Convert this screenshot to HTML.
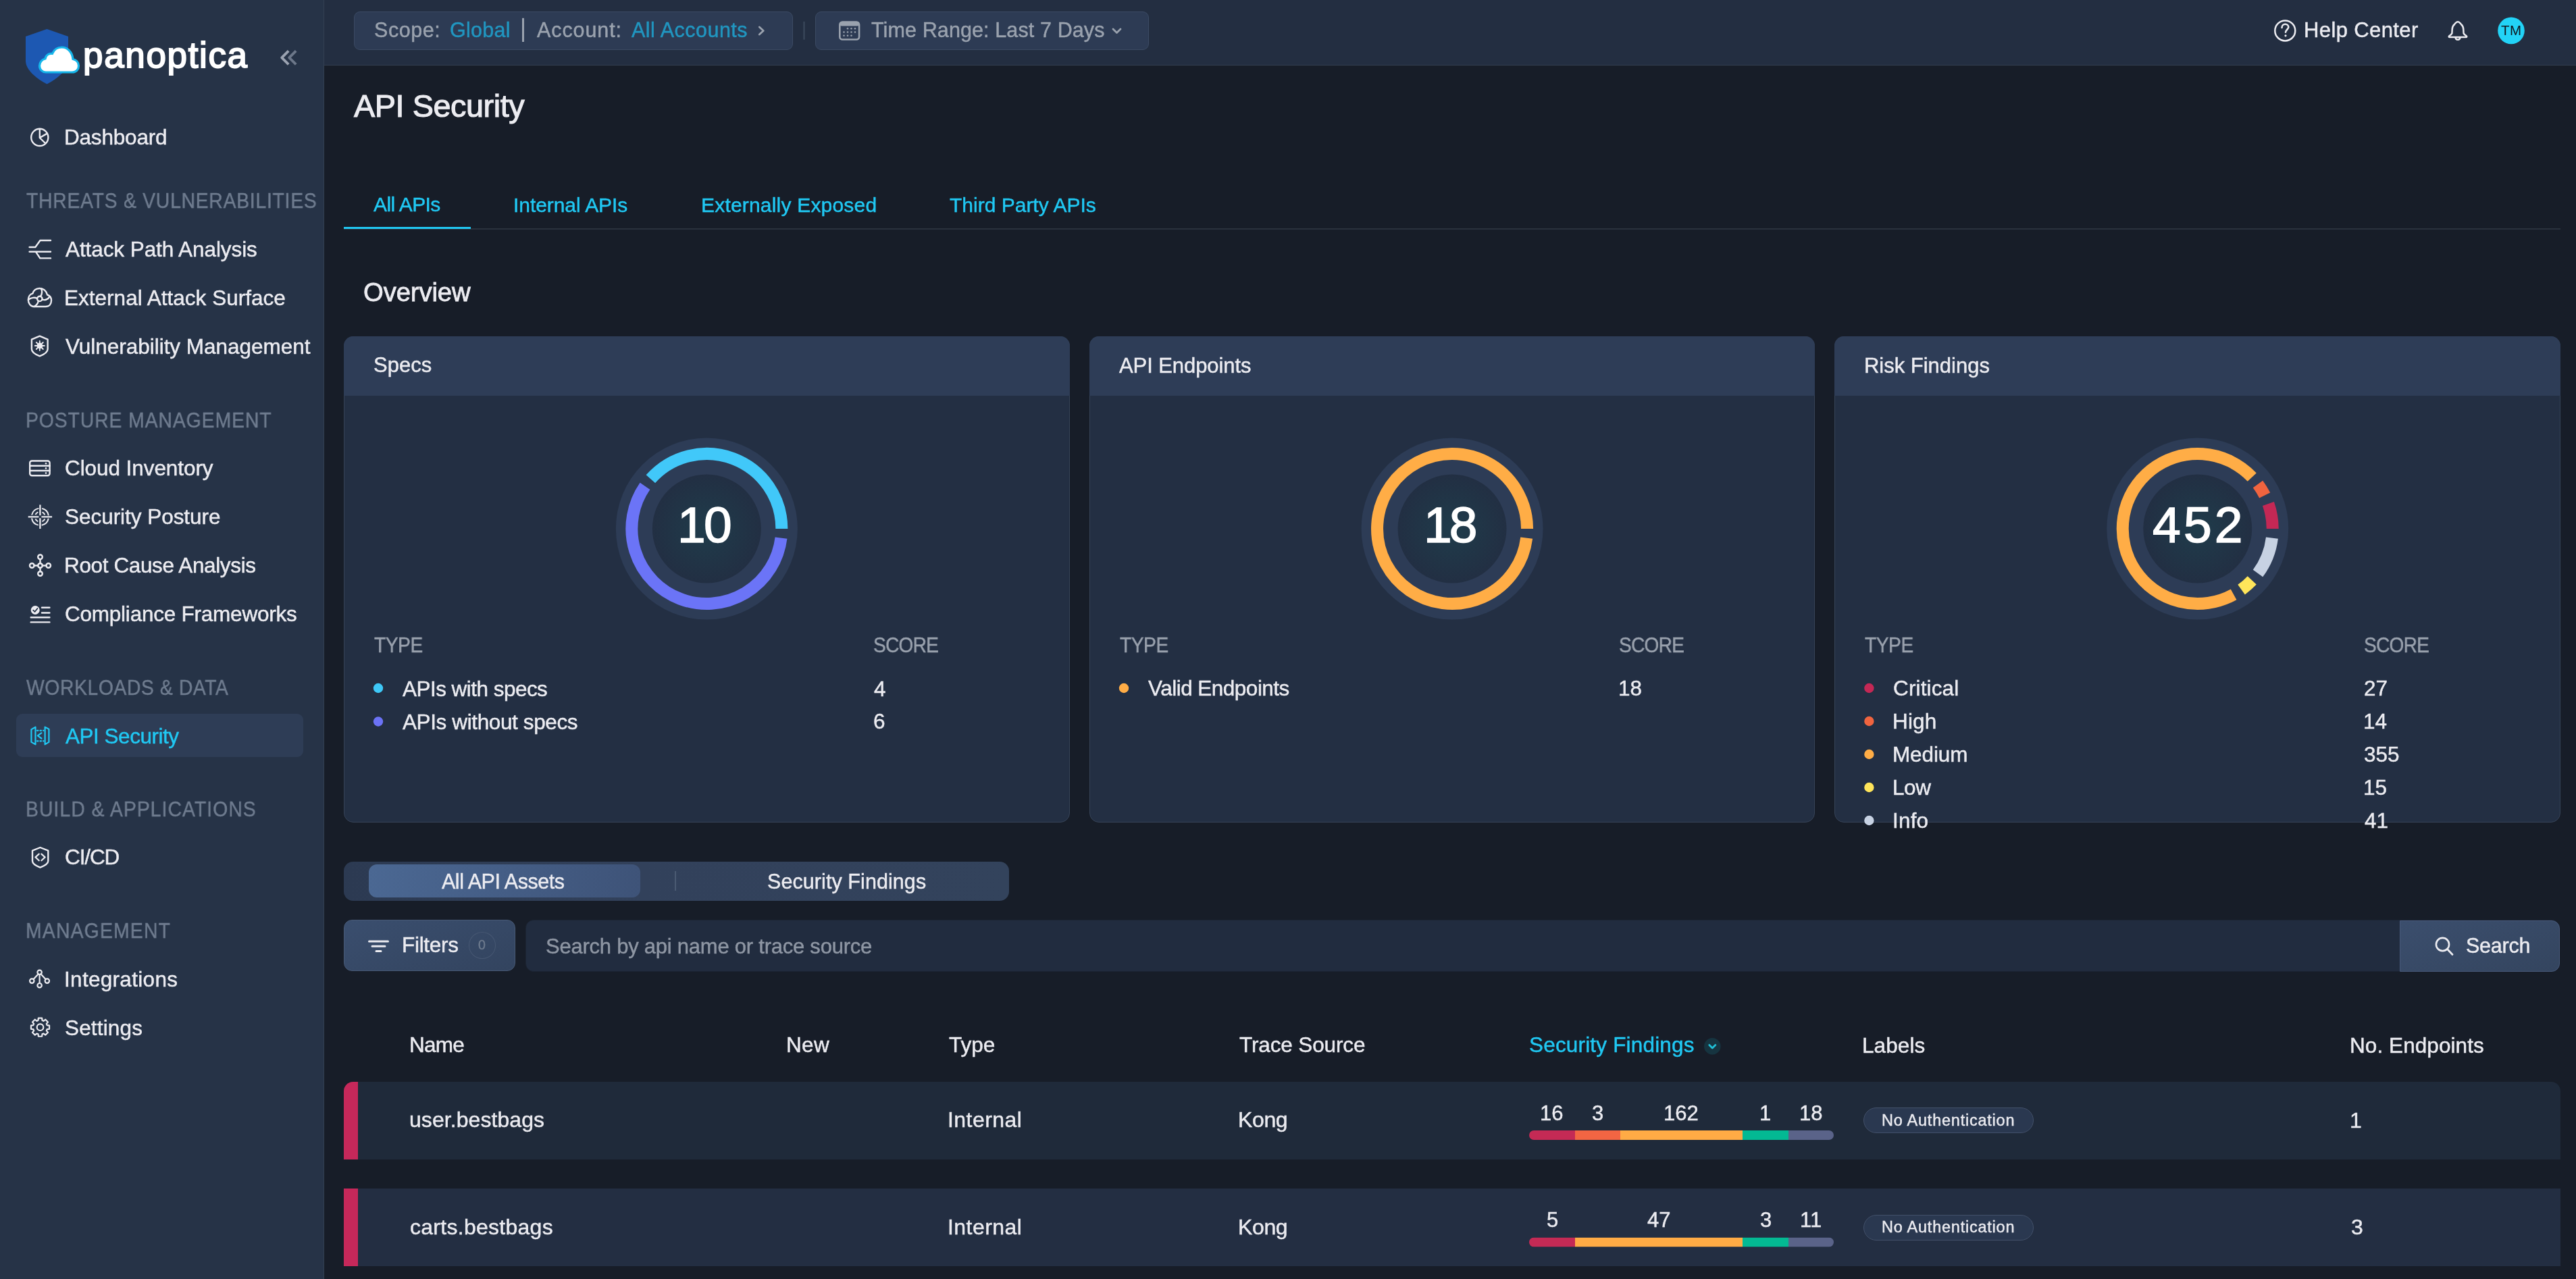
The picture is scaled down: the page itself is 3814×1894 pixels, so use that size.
<!DOCTYPE html>
<html><head><meta charset="utf-8"><title>API Security</title>
<style>
html,body{margin:0;padding:0;}
body{width:3814px;height:1894px;overflow:hidden;position:relative;background:#171d28;font-family:"Liberation Sans", sans-serif;}
.t{position:absolute;white-space:nowrap;line-height:normal;-webkit-text-stroke:0.45px currentColor;will-change:transform;}
</style></head><body>
<div style="position:absolute;left:0px;top:0px;width:480px;height:1894px;background:#263347"></div><div style="position:absolute;left:478.5px;top:0px;width:1.5px;height:1894px;background:#333f51"></div><div style="position:absolute;left:480px;top:0px;width:3334px;height:96px;background:#232e41"></div><div style="position:absolute;left:480px;top:96px;width:3334px;height:1px;background:#323e50"></div><div style="position:absolute;left:524.2px;top:17.3px;width:649.5px;height:56.3px;background:#2d3b54;border:1px solid #3b4a63;box-sizing:border-box;border-radius:9px"></div><div style="position:absolute;left:1206.5px;top:17.3px;width:494.0999999999999px;height:56.3px;background:#2d3b54;border:1px solid #3b4a63;box-sizing:border-box;border-radius:9px"></div><div style="position:absolute;left:24.4px;top:1056.8px;width:425.1px;height:64.60000000000014px;background:#2e3d56;border-radius:9px"></div><div style="position:absolute;left:509px;top:338px;width:3282px;height:2px;background:#2a313d"></div><div style="position:absolute;left:509px;top:335.5px;width:188px;height:3.0px;background:#20c8f3"></div><div style="position:absolute;left:509px;top:498.2px;width:1074.7px;height:719.8px;background:#232f43;border:1.5px solid #364357;box-sizing:border-box;border-radius:14px;overflow:hidden"></div><div style="position:absolute;left:509px;top:498.2px;width:1074.7px;height:87.59999999999997px;background:#2e3d57;border-radius:14px 14px 0 0"></div><div style="position:absolute;left:1612.7px;top:498.2px;width:1074.7px;height:719.8px;background:#232f43;border:1.5px solid #364357;box-sizing:border-box;border-radius:14px;overflow:hidden"></div><div style="position:absolute;left:1612.7px;top:498.2px;width:1074.7px;height:87.59999999999997px;background:#2e3d57;border-radius:14px 14px 0 0"></div><div style="position:absolute;left:2716.4px;top:498.2px;width:1074.7000000000003px;height:719.8px;background:#232f43;border:1.5px solid #364357;box-sizing:border-box;border-radius:14px;overflow:hidden"></div><div style="position:absolute;left:2716.4px;top:498.2px;width:1074.7000000000003px;height:87.59999999999997px;background:#2e3d57;border-radius:14px 14px 0 0"></div><div style="position:absolute;left:509.1px;top:1276.1px;width:984.8000000000001px;height:57.700000000000045px;background:linear-gradient(90deg,#2c3a52,#32415b 45%,#33435c);border-radius:14px"></div><div style="position:absolute;left:546px;top:1280px;width:402px;height:48.90000000000009px;background:linear-gradient(100deg,#4b6893,#3e5378);border-radius:12px"></div><div style="position:absolute;left:998.6px;top:1290px;width:2.0px;height:29px;background:#4a5a72"></div><div style="position:absolute;left:509px;top:1362.3px;width:254px;height:75.29999999999995px;background:linear-gradient(160deg,#3a4e6e,#33445f);border:1px solid #485a76;box-sizing:border-box;border-radius:12px"></div><div style="position:absolute;left:694px;top:1380px;width:39.89999999999998px;height:39.59999999999991px;border:1.5px solid #475873;box-sizing:border-box;border-radius:50%"></div><div style="position:absolute;left:778px;top:1362.3px;width:3012.2px;height:77.20000000000005px;background:#212c3f;border:1px solid #1c2433;box-sizing:border-box;border-radius:12px"></div><div style="position:absolute;left:3553px;top:1363px;width:237.19999999999982px;height:75.79999999999995px;background:linear-gradient(160deg,#3b4e6d,#34455f);border:1px solid #48597a;box-sizing:border-box;border-radius:0 12px 12px 0"></div><div style="position:absolute;left:509px;top:1601.7px;width:3282px;height:115.09999999999991px;background:#1f2a3a;border-radius:14px 14px 0 0"></div><div style="position:absolute;left:509px;top:1601.7px;width:21px;height:115.09999999999991px;background:#c6285a;border-radius:14px 0 0 0"></div><div style="position:absolute;left:509px;top:1759.8px;width:3282px;height:115.20000000000005px;background:#232e42"></div><div style="position:absolute;left:509px;top:1759.8px;width:21px;height:115.20000000000005px;background:#c6285a"></div><div style="position:absolute;left:2758.6px;top:1640.3px;width:252.0px;height:38.100000000000136px;background:#2a3850;border:1.5px solid #425069;box-sizing:border-box;border-radius:20px"></div><div style="position:absolute;left:2758.6px;top:1798.8px;width:252.0px;height:38.100000000000136px;background:#2a3850;border:1.5px solid #425069;box-sizing:border-box;border-radius:20px"></div>
<svg width="3814" height="1894" style="position:absolute;left:0;top:0"><defs><radialGradient id="glow"><stop offset="0" stop-color="#1f3c4b"/><stop offset="1" stop-color="#222f43"/></radialGradient></defs><circle cx="1046.35" cy="783" r="134.5" fill="#2d3c56"/><circle cx="1046.35" cy="783" r="80.5" fill="url(#glow)"/><circle cx="2150.05" cy="783" r="134.5" fill="#2d3c56"/><circle cx="2150.05" cy="783" r="80.5" fill="url(#glow)"/><circle cx="3253.75" cy="783" r="134.5" fill="#2d3c56"/><circle cx="3253.75" cy="783" r="80.5" fill="url(#glow)"/><path d="M1156.52 796.53 A111 111 0 1 1 954.98 719.97" stroke="#6b74f7" stroke-width="18" fill="none"/><path d="M963.34 709.30 A111 111 0 0 1 1157.35 783.00" stroke="#41c8f9" stroke-width="18" fill="none"/><path d="M2260.22 796.53 A111 111 0 1 1 2261.05 783.00" stroke="#ffad46" stroke-width="18" fill="none"/><path d="M3363.92 796.53 A111 111 0 0 1 3343.00 848.99" stroke="#c7d2e3" stroke-width="18" fill="none"/><path d="M3334.29 859.38 A111 111 0 0 1 3318.58 873.10" stroke="#ffe55a" stroke-width="18" fill="none"/><path d="M3307.11 880.33 A111 111 0 1 1 3334.29 706.62" stroke="#ffad46" stroke-width="18" fill="none"/><path d="M3343.00 717.01 A111 111 0 0 1 3353.16 733.62" stroke="#f0643f" stroke-width="18" fill="none"/><path d="M3358.44 746.11 A111 111 0 0 1 3364.75 783.00" stroke="#c42855" stroke-width="18" fill="none"/><circle cx="560" cy="1019" r="7.2" fill="#3ec8f7"/><circle cx="560" cy="1068.5" r="7.2" fill="#6b72f5"/><circle cx="1664" cy="1019" r="7.2" fill="#ffad46"/><circle cx="2767.4" cy="1019" r="7.2" fill="#c42855"/><circle cx="2767.4" cy="1068" r="7.2" fill="#f0643f"/><circle cx="2767.4" cy="1117" r="7.2" fill="#ffad46"/><circle cx="2767.4" cy="1166" r="7.2" fill="#ffe55a"/><circle cx="2767.4" cy="1215" r="7.2" fill="#c7d2e3"/><clipPath id="bc1674"><rect x="2264" y="1674" width="451" height="14" rx="7"/></clipPath><g clip-path="url(#bc1674)"><rect x="2264" y="1674" width="68" height="14" fill="#c42a55"/><rect x="2332" y="1674" width="67" height="14" fill="#f26543"/><rect x="2399" y="1674" width="181" height="14" fill="#ffab45"/><rect x="2580" y="1674" width="68" height="14" fill="#03b993"/><rect x="2648" y="1674" width="67" height="14" fill="#5a6389"/></g><clipPath id="bc1832"><rect x="2264" y="1832.5" width="451" height="14" rx="7"/></clipPath><g clip-path="url(#bc1832)"><rect x="2264" y="1832.5" width="68" height="14" fill="#c42a55"/><rect x="2332" y="1832.5" width="248" height="14" fill="#ffab45"/><rect x="2580" y="1832.5" width="68" height="14" fill="#03b993"/><rect x="2648" y="1832.5" width="67" height="14" fill="#5a6389"/></g><circle cx="58.8" cy="203.4" r="12.6" stroke="#ececf1" stroke-width="2.4" fill="none"/><path d="M58.8 191 V204 L69.8 197.6 M58.8 204 L67 212" stroke="#ececf1" stroke-width="2.4" fill="none" stroke-linecap="round" stroke-linejoin="round" /><path d="M43.6 366 H52.3 L59.5 356 H75 M43.6 372.8 H75 M53 372.8 L59.3 382.4 H75" stroke="#ececf1" stroke-width="2.4" fill="none" stroke-linecap="round" stroke-linejoin="round" /><path d="M50 454 H67.5 C73 454 76 450 76 445 C76 440 73 437.5 70 436.5 C68.5 430.5 64 427 58.5 427 C53 427 49.5 430.5 48.5 434.5 C44.5 435.5 41.8 439.5 41.8 444 C41.8 449.5 45.5 454 50 454 Z" stroke="#ececf1" stroke-width="2.4" fill="none" stroke-linecap="round" stroke-linejoin="round" /><circle cx="58.8" cy="442.4" r="3.7" stroke="#ececf1" stroke-width="2.4" fill="none"/><path d="M61 427.5 C63 432 62 436 60 438.7 M62.5 443.5 C66 445 71.5 443.5 73.5 439 M56.8 445.8 C56 450 53.5 452.5 50.5 454 M55 442 C52 440 46 440.5 42.5 443.5" stroke="#ececf1" stroke-width="2.4" fill="none" stroke-linecap="round" stroke-linejoin="round" /><path d="M58.8 497.7 L70.6 502.6 V517 C70.6 521 65 525 58.8 527.3 C52.6 525 46.9 521 46.9 517 V502.6 Z" stroke="#ececf1" stroke-width="2.4" fill="none" stroke-linecap="round" stroke-linejoin="round" /><circle cx="58.8" cy="512" r="4.4" fill="#ececf1"/><path d="M58.8 505 V519 M51.8 512 H65.8 M53.8 507 L63.8 517 M63.8 507 L53.8 517" stroke="#ececf1" stroke-width="1.8" fill="none" stroke-linecap="round" stroke-linejoin="round" /><rect x="44.2" y="682.5" width="29.4" height="21.8" rx="3" stroke="#ececf1" stroke-width="2.4" fill="none"/><path d="M44.2 689.8 H73.6 M44.2 697 H73.6" stroke="#ececf1" stroke-width="2.4" fill="none" stroke-linecap="round" stroke-linejoin="round" /><circle cx="68" cy="686.2" r="1.3" fill="#ececf1"/><circle cx="68" cy="693.4" r="1.3" fill="#ececf1"/><circle cx="68" cy="700.6" r="1.3" fill="#ececf1"/><path d="M59.4 747.6 V763.3 M59.4 767.3 V783 M41.7 765.3 H57.4 M61.4 765.3 H77.1" stroke="#ececf1" stroke-width="2.3" fill="none" stroke-linejoin="round" stroke-linecap="butt"/><circle cx="59.4" cy="765.3" r="12.6" stroke="#ececf1" stroke-width="2" fill="none" stroke-dasharray="14.8 5" stroke-dashoffset="17.3"/><circle cx="59.4" cy="765.3" r="7.6" stroke="#ececf1" stroke-width="2" fill="none" stroke-dasharray="5.6 6.3" stroke-dashoffset="8.8"/><circle cx="59.5" cy="837.5" r="3.3" stroke="#ececf1" stroke-width="2.4" fill="none"/><circle cx="59.5" cy="824.8" r="3.3" stroke="#ececf1" stroke-width="2.4" fill="none"/><circle cx="59.5" cy="849.5" r="3.3" stroke="#ececf1" stroke-width="2.4" fill="none"/><circle cx="47.3" cy="837.5" r="3.3" stroke="#ececf1" stroke-width="2.4" fill="none"/><circle cx="71.7" cy="837.5" r="3.3" stroke="#ececf1" stroke-width="2.4" fill="none"/><path d="M59.5 828.1 V834.2 M59.5 840.8 V846.2 M50.6 837.5 H56.2 M62.8 837.5 H68.4" stroke="#ececf1" stroke-width="2.4" fill="none" stroke-linecap="round" stroke-linejoin="round" /><circle cx="52.2" cy="903.5" r="6.5" fill="#ececf1"/><path d="M49.2 903.6 L51.5 906 L55.5 901" stroke="#263347" stroke-width="1.8" fill="none" stroke-linecap="round" stroke-linejoin="round" /><path d="M62 899.8 H73.4 M62 907.5 H73.4 M45.7 914.2 H73.4 M45.7 921.4 H73.4" stroke="#ececf1" stroke-width="2.4" fill="none" stroke-linecap="round" stroke-linejoin="round" /><path d="M46.4 1080.2 L52.5 1076.6 V1102.4 L46.4 1098.9 Z M66.6 1076.6 L72.4 1079.8 V1098.9 L66.6 1102.4 Z" stroke="#20c8f3" stroke-width="2.2" fill="none" stroke-linecap="round" stroke-linejoin="round" /><path d="M55 1081.8 H64.5 M55 1097.3 H64.5" stroke="#20c8f3" stroke-width="2.2" fill="none" stroke-linecap="round" stroke-linejoin="round" stroke-dasharray="1.5 3"/><path d="M61.4 1085.3 L55.8 1089.4 L61.4 1093.5" stroke="#20c8f3" stroke-width="2.2" fill="none" stroke-linecap="round" stroke-linejoin="round" /><path d="M59.5 1255 L71.3 1259.7 V1275 C71.3 1279 65 1282.5 59.5 1284.6 C54 1282.5 48 1279 48 1275 V1259.7 Z" stroke="#ececf1" stroke-width="2.4" fill="none" stroke-linecap="round" stroke-linejoin="round" /><path d="M57.7 1264.6 L52.5 1269.4 L57.7 1274.3 M61.4 1264.6 L66.6 1269.4 L61.4 1274.3" stroke="#ececf1" stroke-width="2.2" fill="none" stroke-linecap="round" stroke-linejoin="round" /><circle cx="58.6" cy="1439.8" r="3.2" stroke="#ececf1" stroke-width="2.2" fill="none"/><circle cx="47.3" cy="1452.6" r="3.2" stroke="#ececf1" stroke-width="2.2" fill="none"/><circle cx="69.8" cy="1452.6" r="3.2" stroke="#ececf1" stroke-width="2.2" fill="none"/><circle cx="58.6" cy="1459.2" r="3.2" stroke="#ececf1" stroke-width="2.2" fill="none"/><path d="M58.6 1443 V1456 M56.6 1442.4 L49.4 1450.2 M60.6 1442.4 L67.7 1450.2" stroke="#ececf1" stroke-width="2.2" fill="none" stroke-linecap="round" stroke-linejoin="round" /><path d="M56.87 1507.65 L62.13 1507.65 L62.51 1511.04 L64.56 1511.88 L67.22 1509.76 L70.94 1513.48 L68.82 1516.14 L69.66 1518.19 L73.05 1518.57 L73.05 1523.83 L69.66 1524.21 L68.82 1526.26 L70.94 1528.92 L67.22 1532.64 L64.56 1530.52 L62.51 1531.36 L62.13 1534.75 L56.87 1534.75 L56.49 1531.36 L54.44 1530.52 L51.78 1532.64 L48.06 1528.92 L50.18 1526.26 L49.34 1524.21 L45.95 1523.83 L45.95 1518.57 L49.34 1518.19 L50.18 1516.14 L48.06 1513.48 L51.78 1509.76 L54.44 1511.88 L56.49 1511.04 Z" stroke="#ececf1" stroke-width="2.2" fill="none" stroke-linecap="round" stroke-linejoin="round" /><circle cx="59.5" cy="1521.2" r="4.8" stroke="#ececf1" stroke-width="2.2" fill="none"/><path d="M427.2 75.3 L417.2 85.3 L427.2 95.3" stroke="#9ba3b1" stroke-width="3.8" fill="none" stroke-linejoin="round" stroke-linecap="butt" stroke-linejoin="miter"/><path d="M438.2 75.3 L428.2 85.3 L438.2 95.3" stroke="#6c7789" stroke-width="3.8" fill="none" stroke-linejoin="round" stroke-linecap="butt" stroke-linejoin="miter"/><path d="M69.5 43 L101 54 V90 C101 104 84 117 69.5 124.5 C55 117 38 104 38 90 V54 Z" fill="#1d58b2"/><path d="M68 107 H107 C113 107 116.5 102.5 116.5 97.5 C116.5 92 112.5 88.5 108 87.5 C107 77 100 70 91.5 70 C84 70 79.5 74.5 77.5 79.5 C72.5 78.5 67.5 82 67 87 C62 88 58.5 92.5 58.5 97.5 C58.5 103 63 107 68 107 Z" fill="#ffffff" stroke="#16b6ea" stroke-width="3.2"/><rect x="1243.3" y="32.5" width="28.8" height="26" rx="4" stroke="#9aa2ae" stroke-width="2.6" fill="none"/><rect x="1243.3" y="32.5" width="28.8" height="6" rx="3" fill="#9aa2ae"/><circle cx="1255" cy="42.3" r="1.3" fill="#9aa2ae"/><circle cx="1260.5" cy="42.3" r="1.3" fill="#9aa2ae"/><circle cx="1266" cy="42.3" r="1.3" fill="#9aa2ae"/><circle cx="1249.5" cy="47.5" r="1.3" fill="#9aa2ae"/><circle cx="1255" cy="47.5" r="1.3" fill="#9aa2ae"/><circle cx="1260.5" cy="47.5" r="1.3" fill="#9aa2ae"/><circle cx="1266" cy="47.5" r="1.3" fill="#9aa2ae"/><circle cx="1249.5" cy="52.8" r="1.3" fill="#9aa2ae"/><circle cx="1255" cy="52.8" r="1.3" fill="#9aa2ae"/><circle cx="1260.5" cy="52.8" r="1.3" fill="#9aa2ae"/><path d="M1124.3 40 L1130.3 45.5 L1124.3 51" stroke="#9aa2ae" stroke-width="2.8" fill="none" stroke-linecap="round" stroke-linejoin="round" /><path d="M1648 43 L1653.5 48.5 L1659 43" stroke="#9aa2ae" stroke-width="2.8" fill="none" stroke-linecap="round" stroke-linejoin="round" /><rect x="1189.5" y="31.9" width="2" height="26.8" fill="#3c4a5e"/><rect x="773" y="26.8" width="3" height="35.2" fill="#9aa2ae"/><circle cx="3383.3" cy="45.4" r="15" stroke="#ececf1" stroke-width="2.5" fill="none"/><path d="M3378.5 41 C3378.5 37.5 3381 35.8 3383.5 35.8 C3386.3 35.8 3388.3 37.8 3388.3 40.3 C3388.3 43.5 3384 44 3384 47.8" stroke="#ececf1" stroke-width="2.6" fill="none" stroke-linecap="round" stroke-linejoin="round" /><circle cx="3384" cy="52.8" r="1.6" fill="#ececf1"/><path d="M3639 32.3 C3641.5 32.3 3642.5 34.5 3644 36 C3646 37.8 3647.2 40 3647.3 43.5 L3647.6 49.3 C3648.5 51 3650.5 52.5 3652 53.5 C3652.6 54.2 3652.2 55 3651.3 55 H3626.7 C3625.8 55 3625.4 54.2 3626 53.5 C3627.5 52.5 3629.5 51 3630.4 49.3 L3630.7 43.5 C3630.8 40 3632 37.8 3634 36 C3635.5 34.5 3636.5 32.3 3639 32.3 Z M3635.6 55.3 C3635.6 60 3642.4 60 3642.4 55.3" stroke="#ececf1" stroke-width="2.5" fill="none" stroke-linecap="round" stroke-linejoin="round" /><circle cx="3718" cy="45.4" r="19.8" fill="#22d3f7"/><path d="M546.5 1394 H574.5 M551 1401.3 H570 M557 1408.5 H564" stroke="#ececf1" stroke-width="3" fill="none" stroke-linecap="round" stroke-linejoin="round" /><circle cx="3616.5" cy="1398.5" r="9.6" stroke="#ececf1" stroke-width="2.6" fill="none"/><path d="M3623.5 1405.5 L3631 1413.5" stroke="#ececf1" stroke-width="2.8" fill="none" stroke-linecap="round" stroke-linejoin="round" /><circle cx="2535.3" cy="1549.4" r="12.3" fill="#163440"/><path d="M2530.8 1547.5 L2535.3 1552 L2539.8 1547.5" stroke="#1fbfd6" stroke-width="2.8" fill="none" stroke-linecap="round" stroke-linejoin="round" /></svg>
<div class="t" style="left:123.00px;top:50.59px;font-size:53px;color:#ffffff;letter-spacing:1.652px;-webkit-text-stroke:1.9px #fff;">panoptica</div><div class="t" style="left:95.00px;top:184.99px;font-size:31.5px;color:#ececf1;letter-spacing:-0.198px;">Dashboard</div><div class="t" style="left:39.00px;top:279.49px;font-size:31.5px;color:#6f7c8f;letter-spacing:0.810px;transform:scaleX(0.9);transform-origin:0 0;">THREATS &amp; VULNERABILITIES</div><div class="t" style="left:96.60px;top:350.99px;font-size:31.5px;color:#ececf1;letter-spacing:-0.083px;">Attack Path Analysis</div><div class="t" style="left:95.00px;top:423.49px;font-size:31.5px;color:#ececf1;letter-spacing:0.017px;">External Attack Surface</div><div class="t" style="left:97.00px;top:494.99px;font-size:31.5px;color:#ececf1;letter-spacing:-0.025px;">Vulnerability Management</div><div class="t" style="left:37.60px;top:603.79px;font-size:31.5px;color:#6f7c8f;letter-spacing:1.007px;transform:scaleX(0.9);transform-origin:0 0;">POSTURE MANAGEMENT</div><div class="t" style="left:96.00px;top:675.19px;font-size:31.5px;color:#ececf1;letter-spacing:-0.077px;">Cloud Inventory</div><div class="t" style="left:96.00px;top:746.99px;font-size:31.5px;color:#ececf1;letter-spacing:-0.039px;">Security Posture</div><div class="t" style="left:95.00px;top:819.19px;font-size:31.5px;color:#ececf1;letter-spacing:-0.369px;">Root Cause Analysis</div><div class="t" style="left:96.00px;top:890.59px;font-size:31.5px;color:#ececf1;letter-spacing:-0.230px;">Compliance Frameworks</div><div class="t" style="left:38.50px;top:999.69px;font-size:31.5px;color:#6f7c8f;letter-spacing:0.633px;transform:scaleX(0.9);transform-origin:0 0;">WORKLOADS &amp; DATA</div><div class="t" style="left:96.80px;top:1071.69px;font-size:31.5px;color:#20c8f3;letter-spacing:-0.487px;">API Security</div><div class="t" style="left:37.60px;top:1179.79px;font-size:31.5px;color:#6f7c8f;letter-spacing:1.162px;transform:scaleX(0.9);transform-origin:0 0;">BUILD &amp; APPLICATIONS</div><div class="t" style="left:95.80px;top:1250.99px;font-size:31.5px;color:#ececf1;letter-spacing:-1.100px;">CI/CD</div><div class="t" style="left:37.60px;top:1359.89px;font-size:31.5px;color:#6f7c8f;letter-spacing:1.337px;transform:scaleX(0.9);transform-origin:0 0;">MANAGEMENT</div><div class="t" style="left:94.80px;top:1431.89px;font-size:31.5px;color:#ececf1;letter-spacing:0.304px;">Integrations</div><div class="t" style="left:95.80px;top:1504.29px;font-size:31.5px;color:#ececf1;letter-spacing:0.162px;">Settings</div><div class="t" style="left:554.00px;top:26.91px;font-size:30.5px;color:#9aa2ae;letter-spacing:0.564px;">Scope:</div><div class="t" style="left:665.70px;top:26.91px;font-size:30.5px;color:#2196c0;letter-spacing:0.262px;">Global</div><div class="t" style="left:795.00px;top:26.91px;font-size:30.5px;color:#9aa2ae;letter-spacing:0.899px;">Account:</div><div class="t" style="left:935.00px;top:26.91px;font-size:30.5px;color:#2196c0;letter-spacing:0.493px;">All Accounts</div><div class="t" style="left:1289.80px;top:26.71px;font-size:30.5px;color:#9aa2ae;letter-spacing:0.112px;">Time Range: Last 7 Days</div><div class="t" style="left:3411.30px;top:26.95px;font-size:31px;color:#ececf1;letter-spacing:0.391px;">Help Center</div><div class="t" style="left:3703.00px;top:33.12px;font-size:20.5px;color:#10151d;letter-spacing:0.478px;-webkit-text-stroke:0;">TM</div><div class="t" style="left:523.50px;top:129.80px;font-size:46.8px;color:#ececf1;letter-spacing:-0.443px;-webkit-text-stroke:1.1px currentColor;">API Security</div><div class="t" style="left:552.70px;top:286.37px;font-size:30px;color:#20c8f3;letter-spacing:-0.576px;">All APIs</div><div class="t" style="left:760.00px;top:286.87px;font-size:30px;color:#20c8f3;letter-spacing:-0.063px;">Internal APIs</div><div class="t" style="left:1037.90px;top:287.37px;font-size:30px;color:#20c8f3;letter-spacing:0.193px;">Externally Exposed</div><div class="t" style="left:1406.30px;top:287.37px;font-size:30px;color:#20c8f3;">Third Party APIs</div><div class="t" style="left:537.80px;top:411.33px;font-size:38.3px;color:#ececf1;letter-spacing:-0.149px;-webkit-text-stroke:0.8px currentColor;">Overview</div><div class="t" style="left:552.60px;top:523.45px;font-size:31px;color:#ececf1;letter-spacing:0.035px;">Specs</div><div class="t" style="left:1657.00px;top:523.95px;font-size:31px;color:#ececf1;letter-spacing:-0.080px;">API Endpoints</div><div class="t" style="left:2760.00px;top:523.95px;font-size:31px;color:#ececf1;letter-spacing:-0.013px;">Risk Findings</div><div class="t" style="left:554.00px;top:937.33px;font-size:32px;color:#9aa2ae;letter-spacing:-0.518px;transform:scaleX(0.88);transform-origin:0 0;">TYPE</div><div class="t" style="left:1292.87px;top:937.13px;font-size:32px;color:#9aa2ae;letter-spacing:-0.946px;transform:scaleX(0.88);transform-origin:0 0;">SCORE</div><div class="t" style="left:1657.70px;top:937.33px;font-size:32px;color:#9aa2ae;letter-spacing:-0.518px;transform:scaleX(0.88);transform-origin:0 0;">TYPE</div><div class="t" style="left:2396.57px;top:937.13px;font-size:32px;color:#9aa2ae;letter-spacing:-0.946px;transform:scaleX(0.88);transform-origin:0 0;">SCORE</div><div class="t" style="left:2761.40px;top:937.33px;font-size:32px;color:#9aa2ae;letter-spacing:-0.518px;transform:scaleX(0.88);transform-origin:0 0;">TYPE</div><div class="t" style="left:3500.27px;top:937.13px;font-size:32px;color:#9aa2ae;letter-spacing:-0.946px;transform:scaleX(0.88);transform-origin:0 0;">SCORE</div><div class="t" style="left:596.40px;top:1001.89px;font-size:31.5px;color:#ececf1;letter-spacing:-0.534px;">APIs with specs</div><div class="t" style="left:596.40px;top:1050.79px;font-size:31.5px;color:#ececf1;letter-spacing:-0.386px;">APIs without specs</div><div class="t" style="left:1293.75px;top:1001.59px;font-size:31.5px;color:#ececf1;">4</div><div class="t" style="left:1292.75px;top:1050.39px;font-size:31.5px;color:#ececf1;">6</div><div class="t" style="left:1700.00px;top:1001.29px;font-size:31.5px;color:#ececf1;letter-spacing:-0.515px;">Valid Endpoints</div><div class="t" style="left:2395.50px;top:1001.29px;font-size:31.5px;color:#ececf1;">18</div><div class="t" style="left:2802.80px;top:1001.29px;font-size:31.5px;color:#ececf1;letter-spacing:0.135px;">Critical</div><div class="t" style="left:3499.90px;top:1001.29px;font-size:31.5px;color:#ececf1;">27</div><div class="t" style="left:2801.80px;top:1050.29px;font-size:31.5px;color:#ececf1;letter-spacing:0.178px;">High</div><div class="t" style="left:3498.90px;top:1050.29px;font-size:31.5px;color:#ececf1;">14</div><div class="t" style="left:2801.80px;top:1099.29px;font-size:31.5px;color:#ececf1;letter-spacing:-0.119px;">Medium</div><div class="t" style="left:3499.90px;top:1099.29px;font-size:31.5px;color:#ececf1;">355</div><div class="t" style="left:2801.80px;top:1148.29px;font-size:31.5px;color:#ececf1;letter-spacing:-0.419px;">Low</div><div class="t" style="left:3498.90px;top:1148.29px;font-size:31.5px;color:#ececf1;">15</div><div class="t" style="left:2801.80px;top:1197.29px;font-size:31.5px;color:#ececf1;letter-spacing:0.193px;">Info</div><div class="t" style="left:3500.90px;top:1197.29px;font-size:31.5px;color:#ececf1;">41</div><div class="t" style="left:1003.25px;top:733.92px;font-size:75px;color:#ffffff;letter-spacing:-2.711px;-webkit-text-stroke:1.5px #fff;">10</div><div class="t" style="left:2108.25px;top:733.92px;font-size:75px;color:#ffffff;letter-spacing:-3.961px;-webkit-text-stroke:1.5px #fff;">18</div><div class="t" style="left:3187.00px;top:733.92px;font-size:75px;color:#ffffff;letter-spacing:4.164px;-webkit-text-stroke:1.5px #fff;">452</div><div class="t" style="left:654.30px;top:1287.61px;font-size:30.5px;color:#ececf1;letter-spacing:-0.483px;">All API Assets</div><div class="t" style="left:1136.40px;top:1287.61px;font-size:30.5px;color:#ececf1;letter-spacing:0.076px;">Security Findings</div><div class="t" style="left:595.00px;top:1380.99px;font-size:31.5px;color:#ececf1;letter-spacing:-0.300px;">Filters</div><div class="t" style="left:708.00px;top:1388.45px;font-size:19.6px;color:#6d7a8d;">0</div><div class="t" style="left:807.60px;top:1383.85px;font-size:31px;color:#8e96a3;letter-spacing:-0.238px;">Search by api name or trace source</div><div class="t" style="left:3651.30px;top:1382.61px;font-size:30.5px;color:#ececf1;letter-spacing:-0.255px;">Search</div><div class="t" style="left:605.50px;top:1529.39px;font-size:31.5px;color:#ececf1;letter-spacing:-0.769px;">Name</div><div class="t" style="left:1164.00px;top:1529.39px;font-size:31.5px;color:#ececf1;letter-spacing:0.366px;">New</div><div class="t" style="left:1404.80px;top:1529.39px;font-size:31.5px;color:#ececf1;">Type</div><div class="t" style="left:1834.60px;top:1529.39px;font-size:31.5px;color:#ececf1;letter-spacing:-0.135px;">Trace Source</div><div class="t" style="left:2263.80px;top:1529.39px;font-size:31.5px;color:#20c8f3;letter-spacing:0.178px;">Security Findings</div><div class="t" style="left:2757.40px;top:1529.79px;font-size:31.5px;color:#ececf1;letter-spacing:0.085px;">Labels</div><div class="t" style="left:3478.70px;top:1529.79px;font-size:31.5px;color:#ececf1;letter-spacing:0.073px;">No. Endpoints</div><div class="t" style="left:605.50px;top:1640.33px;font-size:32px;color:#ececf1;letter-spacing:0.062px;">user.bestbags</div><div class="t" style="left:1402.80px;top:1640.33px;font-size:32px;color:#ececf1;letter-spacing:0.439px;">Internal</div><div class="t" style="left:1832.60px;top:1640.33px;font-size:32px;color:#ececf1;letter-spacing:-0.379px;">Kong</div><div class="t" style="left:3478.70px;top:1640.73px;font-size:32px;color:#ececf1;">1</div><div class="t" style="left:606.50px;top:1799.03px;font-size:32px;color:#ececf1;letter-spacing:0.276px;">carts.bestbags</div><div class="t" style="left:1402.80px;top:1799.03px;font-size:32px;color:#ececf1;letter-spacing:0.439px;">Internal</div><div class="t" style="left:1832.60px;top:1799.03px;font-size:32px;color:#ececf1;letter-spacing:-0.379px;">Kong</div><div class="t" style="left:3480.50px;top:1799.13px;font-size:32px;color:#ececf1;">3</div><div class="t" style="left:2785.50px;top:1645.66px;font-size:23.5px;color:#ececf1;letter-spacing:0.766px;">No Authentication</div><div class="t" style="left:2785.50px;top:1804.16px;font-size:23.5px;color:#ececf1;letter-spacing:0.766px;">No Authentication</div><div class="t" style="left:2280.13px;top:1630.65px;font-size:31px;color:#ececf1;">16</div><div class="t" style="left:2356.80px;top:1630.65px;font-size:31px;color:#ececf1;">3</div><div class="t" style="left:2463.16px;top:1630.65px;font-size:31px;color:#ececf1;">162</div><div class="t" style="left:2605.10px;top:1630.65px;font-size:31px;color:#ececf1;">1</div><div class="t" style="left:2664.08px;top:1630.65px;font-size:31px;color:#ececf1;">18</div><div class="t" style="left:2289.50px;top:1789.15px;font-size:31px;color:#ececf1;">5</div><div class="t" style="left:2439.38px;top:1789.15px;font-size:31px;color:#ececf1;">47</div><div class="t" style="left:2605.60px;top:1789.15px;font-size:31px;color:#ececf1;">3</div><div class="t" style="left:2665.23px;top:1789.15px;font-size:31px;color:#ececf1;">11</div>
</body></html>
